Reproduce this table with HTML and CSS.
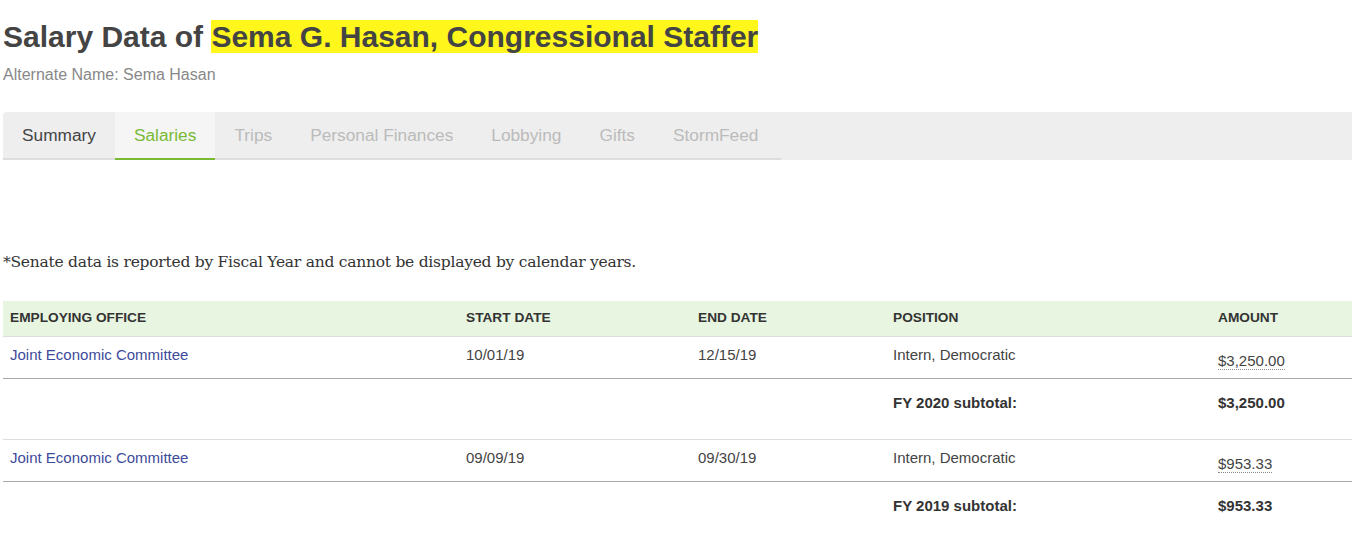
FILE: index.html
```html
<!DOCTYPE html>
<html>
<head>
<meta charset="utf-8">
<link rel="stylesheet" href="styles.css">
</head>
<body>
<div class="page">
  <h1 class="title">Salary Data of <span class="hl">Sema G. Hasan, Congressional Staffer</span></h1>
  <p class="alt">Alternate Name: Sema Hasan</p>

  <div class="tabbar">
    <ul class="tabs">
      <li class="tab tab-first">Summary</li>
      <li class="tab tab-active">Salaries</li>
      <li class="tab tab-off">Trips</li>
      <li class="tab tab-off">Personal Finances</li>
      <li class="tab tab-off">Lobbying</li>
      <li class="tab tab-off">Gifts</li>
      <li class="tab tab-off">StormFeed</li>
    </ul>
  </div>

  <p class="note">*Senate data is reported by Fiscal Year and cannot be displayed by calendar years.</p>

  <table class="salaries">
    <colgroup>
      <col class="c1"><col class="c2"><col class="c3"><col class="c4"><col class="c5">
    </colgroup>
    <thead>
      <tr>
        <th>Employing Office</th>
        <th>Start Date</th>
        <th>End Date</th>
        <th>Position</th>
        <th>Amount</th>
      </tr>
    </thead>
    <tbody>
      <tr class="row">
        <td><a class="office" href="#">Joint Economic Committee</a></td>
        <td>10/01/19</td>
        <td>12/15/19</td>
        <td>Intern, Democratic</td>
        <td><span class="amt">$3,250.00</span></td>
      </tr>
      <tr class="sub">
        <td></td><td></td><td></td>
        <td>FY 2020 subtotal:</td>
        <td>$3,250.00</td>
      </tr>
      <tr class="row">
        <td><a class="office" href="#">Joint Economic Committee</a></td>
        <td>09/09/19</td>
        <td>09/30/19</td>
        <td>Intern, Democratic</td>
        <td><span class="amt">$953.33</span></td>
      </tr>
      <tr class="sub">
        <td></td><td></td><td></td>
        <td>FY 2019 subtotal:</td>
        <td>$953.33</td>
      </tr>
    </tbody>
  </table>
</div>
</body>
</html>
```

FILE: styles.css
```css
html, body {
  margin: 0;
  padding: 0;
  background: #ffffff;
}

.page {
  padding: 0 0 0 3px;
  font-family: "Liberation Sans", Arial, sans-serif;
  color: #444444;
}

.title {
  margin: 20px 0 0 0;
  font-size: 30px;
  font-weight: bold;
  line-height: normal;
  color: #444444;
}

.hl {
  background: #fff71c;
}

.alt {
  margin: 12px 0 0 0;
  font-size: 16px;
  line-height: 18px;
  color: #888888;
}

.tabbar {
  margin-top: 28px;
  background: #eeeeee;
  border-top-left-radius: 4px;
  height: 48px;
}

.tabs {
  list-style: none;
  margin: 0;
  padding: 0;
  display: flex;
  width: 778px;
  height: 46px;
  border-bottom: 2px solid #dddddd;
}

.tab {
  padding: 1px 19px 0;
  font-size: 17.3px;
  line-height: 45px;
  height: 45px;
  white-space: nowrap;
}

.tab-first {
  color: #444444;
  border-top-left-radius: 4px;
}

.tab-active {
  color: #7aba35;
  background: #f5f5f5;
  border-bottom: 2px solid #7aba35;
  margin-bottom: -2px;
}

.tab-off {
  color: #bbbbbb;
}

.note {
  margin: 92px 0 0 0;
  font-family: "DejaVu Serif", Georgia, serif;
  font-size: 15.5px;
  line-height: 20px;
  color: #333333;
  letter-spacing: -0.25px;
}

.salaries {
  margin-top: 29px;
  width: 1349px;
  border-collapse: collapse;
  table-layout: fixed;
}

.c1 { width: 456px; }
.c2 { width: 232px; }
.c3 { width: 195px; }
.c4 { width: 325px; }
.c5 { width: 141px; }

.salaries th {
  background: #e8f5e0;
  text-align: left;
  text-transform: uppercase;
  font-size: 13.7px;
  font-weight: bold;
  line-height: 16px;
  color: #333333;
  padding: 9px 7px 10px;
  border-bottom: 1px solid #dddddd;
}

.salaries td {
  font-size: 15px;
  line-height: 17px;
  color: #444444;
  vertical-align: top;
  padding: 9px 7px 0;
}

.row td {
  height: 32px;
  border-bottom: 1px solid #aaaaaa;
}

.sub td {
  font-weight: bold;
  padding: 15px 7px 0;
  height: 45px;
  border-bottom: 1px solid #dddddd;
  color: #333333;
}

.sub:last-child td {
  border-bottom: none;
}

.office {
  color: #3d4b9b;
  text-decoration: none;
}

.amt {
  display: inline-block;
  margin-top: 6px;
  border-bottom: 1px dotted #888888;
  line-height: 17px;
}
```
